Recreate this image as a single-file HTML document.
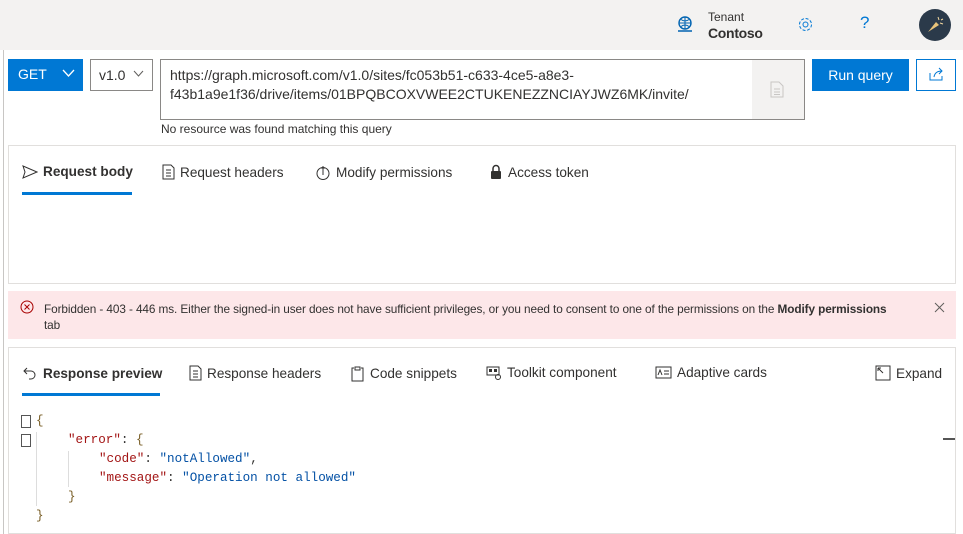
<!DOCTYPE html>
<html><head><meta charset="utf-8"><style>
*{box-sizing:border-box;margin:0;padding:0}
html{overflow:hidden;width:963px;height:534px}
body{width:963px;height:534px;overflow:hidden;background:#fff;font-family:"Liberation Sans",sans-serif;color:#323130;position:relative;font-size:14px}
.abs{position:absolute}
.top{left:0;top:0;width:963px;height:50px;background:#f3f2f1}
.tab{position:absolute;font-size:13.6px;color:#323130;display:flex;align-items:center;gap:5px}
.mono{font-family:"Liberation Mono",monospace;font-size:12.6px;position:absolute;white-space:pre}
.k{color:#a31515}.s{color:#0451a5}.p{color:#323130}.b{color:#795e26}
</style></head><body>
<div class="abs top"></div>
<svg class="abs" style="left:677px;top:16px" width="16" height="17" viewBox="0 0 16 17"><circle cx="8" cy="7" r="6" fill="none" stroke="#0063b1" stroke-width="1.4"/><path d="M2 7h12M8 1v12M4 3.5q4 3 8 0M4 10.5q4-3 8 0" stroke="#0063b1" fill="none"/><path d="M1 15h14" stroke="#0063b1" stroke-width="1.5"/></svg>
<div class="abs" style="left:708px;top:10px;font-size:12px;color:#323130">Tenant</div>
<div class="abs" style="left:708px;top:25px;font-size:14px;font-weight:bold;color:#323130;letter-spacing:-0.3px">Contoso</div>
<svg class="abs" style="left:797px;top:16px" width="17" height="17" viewBox="0 0 17 17"><circle cx="8.5" cy="8.5" r="2.5" fill="none" stroke="#0078d4"/><circle cx="8.5" cy="8.5" r="6" fill="none" stroke="#0078d4" stroke-dasharray="3 1.7"/></svg>
<div class="abs" style="left:860px;top:13px;font-size:17px;color:#0078d4">?</div>
<div class="abs" style="left:919px;top:9px;width:32px;height:32px;border-radius:50%;background:#2b3a4a"></div>
<svg class="abs" style="left:925px;top:14px" width="20" height="22" viewBox="0 0 20 22"><path d="M3 18l8-10 3 3z" fill="#e8c37a"/><path d="M13 3l1 3M16 6l2-1M15 9l3 1" stroke="#f4d9a0"/></svg>
<div class="abs" style="left:3px;top:50px;width:1px;height:484px;background:#c8c6c4"></div>
<div class="abs" style="left:8px;top:59px;width:75px;height:32px;background:#0078d4;color:#fff;font-size:14px;padding:7px 0 0 10px">GET</div>
<svg class="abs" style="left:62px;top:69px" width="13" height="9"><path d="M1 1l5.5 6 5.5-6" stroke="#fff" fill="none" stroke-width="1.3"/></svg>
<div class="abs" style="left:90px;top:59px;width:63px;height:32px;border:1px solid #8a8886;padding:7px 0 0 8px;font-size:14px">v1.0</div>
<svg class="abs" style="left:133px;top:70px" width="11" height="7"><path d="M1 1l4.5 5 4.5-5" stroke="#605e5c" fill="none"/></svg>
<div class="abs" style="left:160px;top:59px;width:645px;height:61px;border:1px solid #8a8886"></div>
<div class="abs" style="left:752px;top:60px;width:52px;height:59px;background:#f3f2f1"></div>
<svg class="abs" style="left:770px;top:81px" width="14" height="17"><path d="M1 1h8l4 4v11H1z" fill="none" stroke="#c8c6c4"/><path d="M4 8h6M4 11h6M4 13.5h6" stroke="#c8c6c4"/></svg>
<div class="abs" style="left:170px;top:66px;font-size:14px;line-height:19px;color:#323130">https://graph.microsoft.com/v1.0/sites/fc053b51-c633-4ce5-a8e3-<br>f43b1a9e1f36/drive/items/01BPQBCOXVWEE2CTUKENEZZNCIAYJWZ6MK/invite/</div>
<div class="abs" style="left:161px;top:122px;font-size:12px">No resource was found matching this query</div>
<div class="abs" style="left:812px;top:59px;width:97px;height:32px;background:#0078d4;color:#fff;font-size:14px;text-align:center;padding-top:8px">Run query</div>
<div class="abs" style="left:916px;top:59px;width:40px;height:32px;border:1px solid #0078d4"></div>
<svg class="abs" style="left:928px;top:66px" width="16" height="16"><path d="M2 7v7h12v-4" fill="none" stroke="#0078d4"/><path d="M6 11q1-6 8-6M11 2l3 3-3 3" fill="none" stroke="#0078d4"/></svg>
<div class="abs" style="left:8px;top:145px;width:948px;height:139px;border:1px solid #e1dfdd"></div>
<div class="tab" style="left:22px;top:164px;font-weight:bold"><svg width="16" height="14"><path d="M1 1l14 6-14 6 2-6z" fill="none" stroke="#323130"/></svg>Request body</div>
<div class="abs" style="left:22px;top:192px;width:110px;height:3px;background:#0078d4"></div>
<div class="tab" style="left:161px;top:164px"><svg width="14" height="16"><path d="M2 1h8l3 3v11H2z" fill="none" stroke="#323130"/><path d="M5 6h5M5 9h5M5 12h5" stroke="#323130"/></svg>Request headers</div>
<div class="tab" style="left:315px;top:164px"><svg width="16" height="17"><circle cx="8" cy="9.5" r="6" fill="none" stroke="#323130"/><path d="M8 2v9M6 4h4" stroke="#323130"/></svg>Modify permissions</div>
<div class="tab" style="left:489px;top:164px"><svg width="14" height="16"><path d="M4 7V4.5a3 3 0 016 0V7" fill="none" stroke="#323130" stroke-width="1.5"/><rect x="2" y="7" width="10" height="8" rx="1" fill="#323130"/></svg>Access token</div>
<div class="abs" style="left:8px;top:291px;width:948px;height:48px;background:#fde7e9"></div>
<svg class="abs" style="left:20px;top:300px" width="14" height="14"><circle cx="7" cy="7" r="6" fill="none" stroke="#a80000"/><path d="M4.5 4.5l5 5M9.5 4.5l-5 5" stroke="#a80000"/></svg>
<div class="abs" style="left:44px;top:301px;font-size:11.8px;line-height:16px;width:860px;letter-spacing:-0.1px">Forbidden - 403 - 446 ms. Either the signed-in user does not have sufficient privileges, or you need to consent to one of the permissions on the <b>Modify permissions</b> tab</div>
<svg class="abs" style="left:934px;top:302px" width="11" height="11"><path d="M1 1l9 9M10 1l-9 9" stroke="#605e5c"/></svg>
<div class="abs" style="left:8px;top:347px;width:948px;height:187px;border:1px solid #e1dfdd"></div>
<div class="tab" style="left:22px;top:365px;font-weight:bold"><svg width="16" height="16"><path d="M5 3L2 6l3 3M2 6h7a4 4 0 010 8H7" fill="none" stroke="#323130"/></svg>Response preview</div>
<div class="abs" style="left:22px;top:393px;width:138px;height:3px;background:#0078d4"></div>
<div class="tab" style="left:188px;top:365px"><svg width="14" height="16"><path d="M2 1h8l3 3v11H2z" fill="none" stroke="#323130"/><path d="M5 6h5M5 9h5M5 12h5" stroke="#323130"/></svg>Response headers</div>
<div class="tab" style="left:350px;top:365px"><svg width="15" height="17"><path d="M4 3H2v13h11V3h-2M5 2h5v3H5z" fill="none" stroke="#323130"/></svg>Code snippets</div>
<div class="tab" style="left:486px;top:365px"><svg width="16" height="14"><rect x="1" y="1" width="12" height="8" fill="none" stroke="#323130"/><rect x="3" y="3" width="3" height="3" fill="#323130"/><rect x="8" y="3" width="3" height="3" fill="#323130"/><circle cx="12" cy="11" r="2.5" fill="none" stroke="#323130"/></svg>Toolkit component</div>
<div class="tab" style="left:655px;top:365px"><svg width="17" height="13"><rect x="1" y="1" width="15" height="11" fill="none" stroke="#323130"/><path d="M3 9l2-5 2 5M9 5h5M9 8h5" stroke="#323130" fill="none"/></svg>Adaptive cards</div>
<div class="tab" style="left:875px;top:365px"><svg width="16" height="16"><rect x="1" y="1" width="14" height="14" fill="none" stroke="#323130"/><path d="M3 3l5 5M3 3h3M3 3v3" stroke="#323130" fill="none"/></svg>Expand</div>
<div class="abs" style="left:21px;top:415px;width:10px;height:13px;border:1px solid #555"></div>
<div class="abs" style="left:21px;top:434px;width:10px;height:13px;border:1px solid #555"></div>
<div class="abs" style="left:36px;top:432px;width:1px;height:74px;background:#ddd"></div>
<div class="abs" style="left:68px;top:451px;width:1px;height:36px;background:#ddd"></div>
<div class="abs" style="left:943px;top:438px;width:12px;height:2px;background:#555"></div>
<div class="mono b" style="left:36px;top:414px">{</div>
<div class="mono" style="left:68px;top:433px"><span class="k">"error"</span><span class="p">: </span><span class="b">{</span></div>
<div class="mono" style="left:99px;top:452px"><span class="k">"code"</span><span class="p">: </span><span class="s">"notAllowed"</span><span class="p">,</span></div>
<div class="mono" style="left:99px;top:471px"><span class="k">"message"</span><span class="p">: </span><span class="s">"Operation not allowed"</span></div>
<div class="mono b" style="left:68px;top:490px">}</div>
<div class="mono b" style="left:36px;top:509px">}</div>
</body></html>
